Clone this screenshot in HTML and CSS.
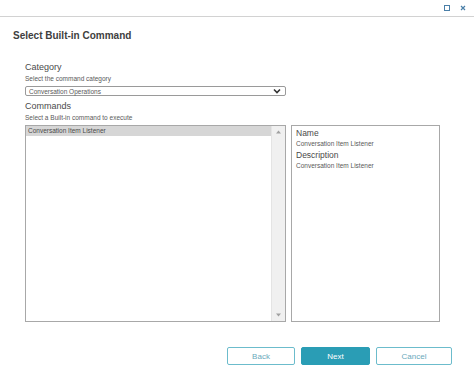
FILE: index.html
```html
<!DOCTYPE html>
<html lang="en">
<head>
    <meta charset="UTF-8">
    <title>Select Built-in Command</title>
    <link rel="stylesheet" href="styles.css">
</head>
<body>
    <div class="titlebar">
        <span class="win-btn">
            <svg width="8" height="8" viewBox="0 0 8 8"><rect x="1.5" y="1.5" width="5" height="5" fill="none" stroke="#4a7fa8" stroke-width="1"/></svg>
        </span>
        <span class="win-btn">
            <svg width="8" height="8" viewBox="0 0 8 8"><path d="M2 2 L6 6 M6 2 L2 6" stroke="#4a7fa8" stroke-width="1.2"/></svg>
        </span>
    </div>

    <h1 class="dialog-title">Select Built-in Command</h1>

    <div class="content">
        <div class="label">Category</div>
        <div class="hint">Select the command category</div>
        <div class="select">
            <span>Conversation Operations</span>
            <svg width="8" height="6" viewBox="0 0 8 6"><path d="M1 1.5 L4 4.5 L7 1.5" fill="none" stroke="#333" stroke-width="1.6"/></svg>
        </div>

        <div class="label label-commands">Commands</div>
        <div class="hint">Select a Built-in command to execute</div>

        <div class="panes">
            <div class="list">
                <div class="list-items">
                    <div class="list-item selected">Conversation Item Listener</div>
                </div>
                <div class="scrollbar">
                    <svg width="5" height="4" viewBox="0 0 5 4"><path d="M0 3.5 L2.5 0.5 L5 3.5 Z" fill="#a0a0a0"/></svg>
                    <svg width="5" height="4" viewBox="0 0 5 4"><path d="M0 0.5 L2.5 3.5 L5 0.5 Z" fill="#a0a0a0"/></svg>
                </div>
            </div>
            <div class="details">
                <div class="detail-head">Name</div>
                <div class="detail-text">Conversation Item Listener</div>
                <div class="detail-head">Description</div>
                <div class="detail-text">Conversation Item Listener</div>
            </div>
        </div>
    </div>

    <div class="footer">
        <button class="btn">Back</button>
        <button class="btn btn-primary">Next</button>
        <button class="btn btn-cancel">Cancel</button>
    </div>
</body>
</html>
```

FILE: styles.css
```css
* {
    margin: 0;
    padding: 0;
    box-sizing: border-box;
    font-family: 'Liberation Sans', Arial, sans-serif;
}

body {
    width: 474px;
    height: 373px;
    background: #fff;
    color: #444;
    overflow: hidden;
}

.titlebar {
    height: 17px;
    border-bottom: 1px solid #d2d2d2;
    display: flex;
    justify-content: flex-end;
    align-items: center;
    gap: 8px;
    padding-right: 7px;
}

.win-btn {
    width: 8px;
    height: 8px;
    display: flex;
}

.dialog-title {
    margin-top: 12px;
    padding-left: 13px;
    font-size: 10px;
    line-height: 14px;
    font-weight: 700;
    color: #404040;
}

.content {
    margin-top: 18px;
    margin-left: 25px;
    width: 415px;
}

.label {
    font-size: 9px;
    line-height: 12px;
    color: #4a4a4a;
}

.label-commands {
    margin-top: 4px;
}

.hint {
    margin-top: 1px;
    font-size: 6.5px;
    line-height: 10px;
    color: #595959;
}

.select {
    margin-top: 2px;
    width: 261px;
    height: 10px;
    border: 1px solid #9a9a9a;
    border-radius: 2px;
    display: flex;
    align-items: center;
    justify-content: space-between;
    padding: 0 4px 0 3px;
    font-size: 6.5px;
    color: #595959;
}

.panes {
    margin-top: 2px;
    display: flex;
    gap: 5px;
    height: 197px;
}

.list {
    width: 261px;
    border: 1px solid #a8a8a8;
    display: flex;
}

.list-items {
    flex: 1;
}

.list-item {
    height: 10px;
    line-height: 10px;
    padding-left: 2px;
    font-size: 6.5px;
    color: #4a4a4a;
}

.list-item.selected {
    background: #d6d6d6;
}

.scrollbar {
    width: 14px;
    background: #f0f0f0;
    border-left: 1px solid #e4e4e4;
    display: flex;
    flex-direction: column;
    justify-content: space-between;
    align-items: center;
    padding: 4px 0;
}

.details {
    width: 149px;
    border: 1px solid #a8a8a8;
    padding: 1px 4px;
}

.detail-head {
    font-size: 8.5px;
    line-height: 12px;
    color: #4a4a4a;
}

.detail-text {
    font-size: 6.5px;
    line-height: 10px;
    color: #595959;
}

.footer {
    margin-top: 25px;
    display: flex;
    gap: 6px;
    padding-left: 227px;
}

.btn {
    width: 68px;
    height: 18px;
    border: 1px solid #6cbccc;
    border-radius: 2px;
    background: #fff;
    color: #6aa9bb;
    font-size: 8px;
    cursor: pointer;
}

.btn-primary {
    width: 69px;
    background: #2a9db5;
    border-color: #2a9db5;
    color: #fff;
}

.btn-cancel {
    width: 76px;
}
```
